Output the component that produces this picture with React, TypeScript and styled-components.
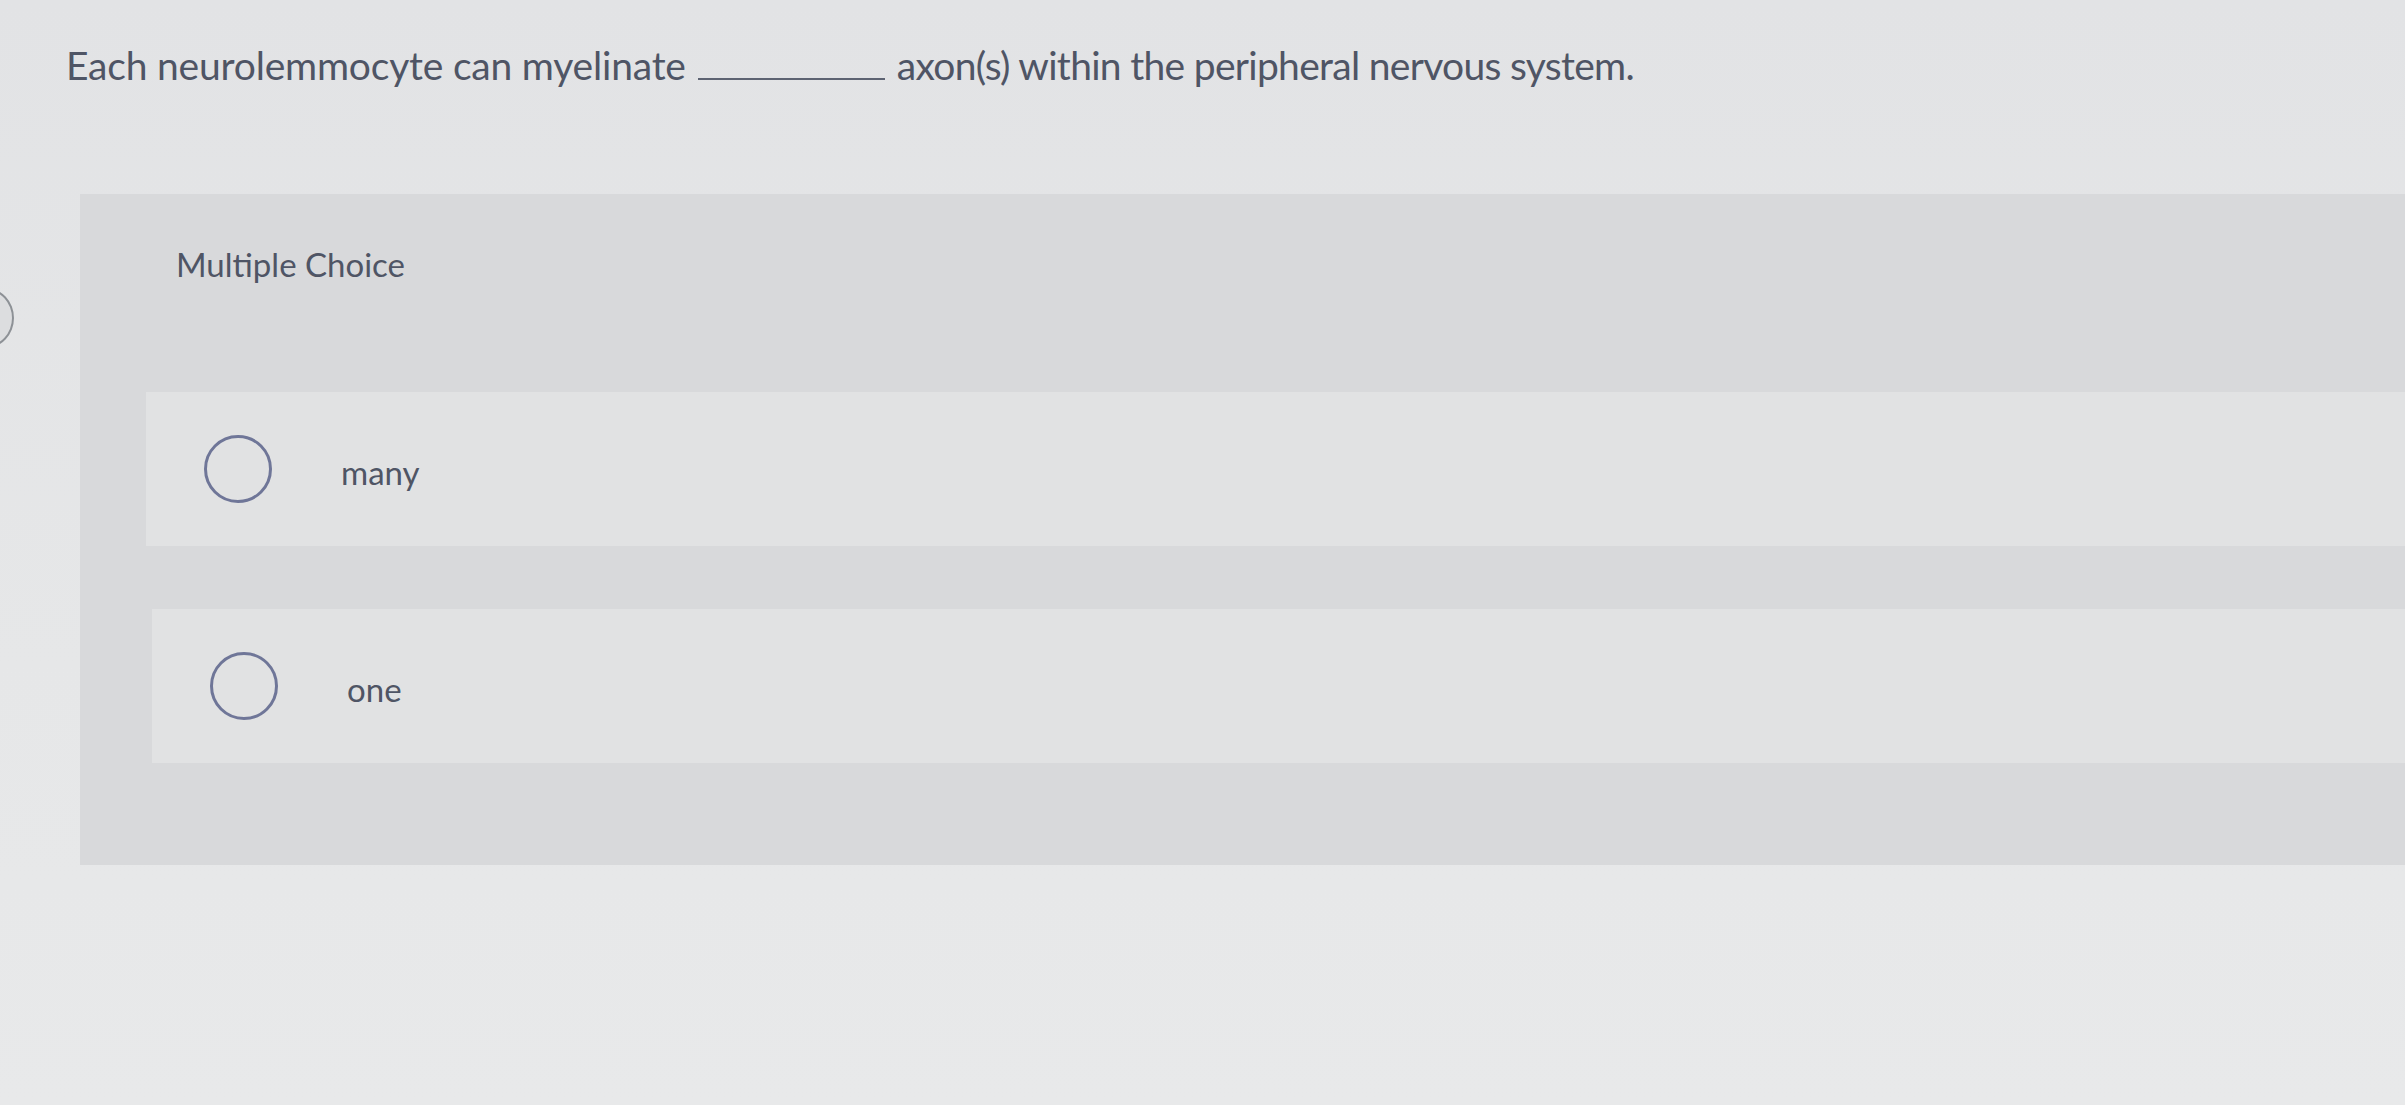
import React, { useState } from 'react';
import styled, { createGlobalStyle } from 'styled-components';

const GlobalStyle = createGlobalStyle`
  html, body {
    margin: 0;
    padding: 0;
    background: #e4e5e7;
    font-family: Lato, "Open Sans", "Liberation Sans", sans-serif;
    overflow: hidden;
  }
`;

const Page = styled.div`
  position: relative;
  width: 2405px;
  height: 1105px;
  padding-top: 42px;
  box-sizing: border-box;
  background: linear-gradient(180deg, #e2e3e5 0%, #e6e7e8 60%, #e8e9ea 100%);
`;

// the edge of a round button peeking in from the left border
const EdgeButton = styled.div`
  position: absolute;
  left: -42px;
  top: 288px;
  width: 52px;
  height: 56px;
  border: 2px solid #8d9196;
  border-radius: 50%;
  background: #dcdddf;
`;

const Question = styled.p`
  margin: 0 0 0 66px;
  font-size: 39px;
  line-height: 46px;
  color: #4f5565;
  letter-spacing: -0.2px;
`;

const Tail = styled.span`
  letter-spacing: -0.7px;
`;

const Blank = styled.span`
  display: inline-block;
  width: 187px;
  height: 32px;
  margin: 0 12px 0 12px;
  border-bottom: 2px solid #5d6372;
  vertical-align: baseline;
`;

const Panel = styled.section`
  margin: 106px 0 0 80px;
  padding: 50px 0 102px 66px;
  background: #d8d9db;
`;

const PanelTitle = styled.h2`
  margin: 0 0 0 30px;
  font-size: 33px;
  line-height: 40px;
  font-weight: 400;
  color: #4f5565;
`;

const Options = styled.div`
  margin-top: 108px;
  display: flex;
  flex-direction: column;
  gap: 63px;
`;

const OptionRow = styled.label<{ $shift: number }>`
  display: flex;
  align-items: center;
  height: 154px;
  margin-left: ${p => p.$shift}px;
  padding-left: 58px;
  background: #e1e2e3;
  cursor: pointer;
`;

const Radio = styled.span<{ $checked: boolean }>`
  flex: none;
  width: 68px;
  height: 68px;
  box-sizing: border-box;
  border: 3px solid #6f7698;
  border-radius: 50%;
  background: ${p => (p.$checked ? 'radial-gradient(circle, #6f7698 0 40%, transparent 42%)' : 'transparent')};
`;

const OptionText = styled.span`
  margin-left: 69px;
  padding-top: 6px;
  font-size: 33px;
  line-height: 40px;
  color: #4f5565;
`;

const choices = [
  { id: 'many', label: 'many', shift: 0 },
  { id: 'one', label: 'one', shift: 6 },
];

const App: React.FC = () => {
  const [selected, setSelected] = useState<string | null>(null);

  return (
    <Page>
      <GlobalStyle />
      <EdgeButton />
      <Question>
        Each neurolemmocyte can myelinate<Blank />
        <Tail>axon(s) within the peripheral nervous system.</Tail>
      </Question>
      <Panel>
        <PanelTitle>Multiple Choice</PanelTitle>
        <Options>
          {choices.map(choice => (
            <OptionRow key={choice.id} $shift={choice.shift} onClick={() => setSelected(choice.id)}>
              <Radio $checked={selected === choice.id} />
              <OptionText>{choice.label}</OptionText>
            </OptionRow>
          ))}
        </Options>
      </Panel>
    </Page>
  );
};

export default App;
